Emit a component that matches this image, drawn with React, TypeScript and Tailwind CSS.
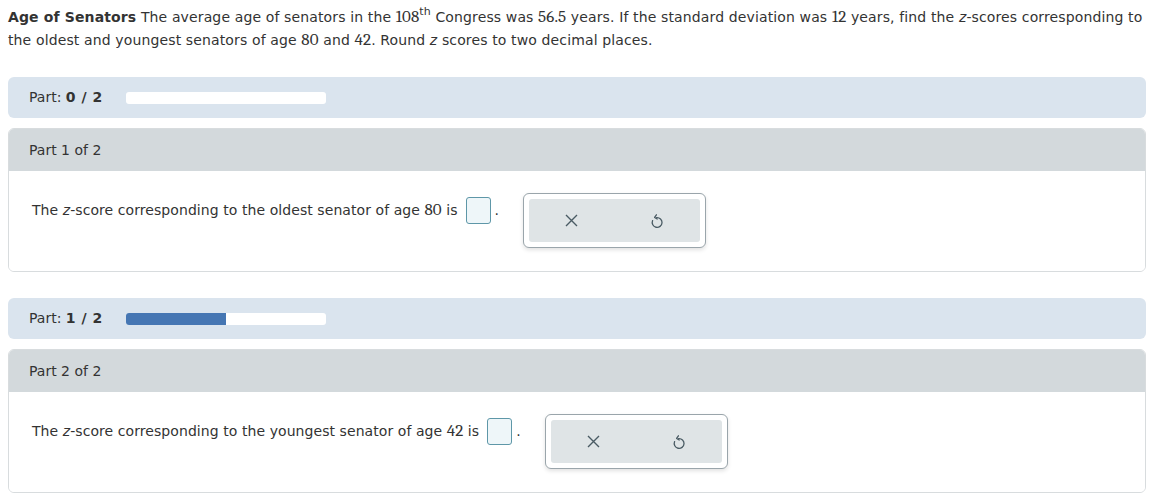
import React from 'react';

const Num: React.FC<{ children: React.ReactNode }> = ({ children }) => (
  <span className="font-serif text-[17px] leading-none">{children}</span>
);

const ProgressBar: React.FC<{ done: number; total: number }> = ({ done, total }) => (
  <div className="flex items-center h-[41px] rounded-md bg-[#dae4ee] pl-[21px]">
    <span className="w-[97px]">
      Part: <b className="tracking-[0.5px]">{done} / {total}</b>
    </span>
    <div className="w-[200px] h-[12px] rounded-[3px] bg-white overflow-hidden">
      <div className="h-full bg-[#4576b3]" style={{ width: `${(done / total) * 100}%` }} />
    </div>
  </div>
);

const XIcon = () => (
  <svg width="13" height="13" viewBox="0 0 13 13" fill="none" stroke="#4a5b64" strokeWidth="1.4">
    <path d="M1 1 L12 12 M12 1 L1 12" />
  </svg>
);

const UndoIcon = () => (
  <svg width="12" height="16" viewBox="0 0 12 16" fill="none" stroke="#4a5b64" strokeWidth="1.3" strokeLinecap="round" strokeLinejoin="round">
    <path d="M5.6 4.6 A4.9 4.9 0 1 1 1.6 7.6" />
    <path d="M5.4 1.8 L3.6 4.4 L6.2 6" />
  </svg>
);

const PartCard: React.FC<{ title: string; children: React.ReactNode }> = ({ title, children }) => (
  <div className="rounded-md border border-[#d8dcde] overflow-hidden">
    <div className="h-[42px] bg-[#d3d9dc] flex items-center pl-[20px]">{title}</div>
    <div className="h-[100px] bg-white flex items-start pl-[23px] pt-[22px]">{children}</div>
  </div>
);

const Answer: React.FC<{ before: React.ReactNode }> = ({ before }) => (
  <div className="flex items-start">
    <div className="flex items-center h-[30px] mt-[2px]">
      <span className="tracking-[0.07px]">{before}</span>
      <span className="ml-[8px] inline-block w-[25px] h-[27px] rounded-[3px] border border-[#5e97a8] bg-[#eef6f9]" />
      <span className="ml-[4px]">.</span>
    </div>
    <div className="ml-[24px] w-[183px] h-[55px] rounded-md border border-[#9aa5ab] bg-white p-[5px] shadow-[0_2px_4px_rgba(0,0,0,0.12)]">
      <div className="h-full rounded-[3px] bg-[#dfe4e6] flex items-center">
        <div className="w-1/2 flex justify-center"><XIcon /></div>
        <div className="w-1/2 flex justify-center"><UndoIcon /></div>
      </div>
    </div>
  </div>
);

export default function App() {
  return (
    <div className="bg-white text-[14px] text-[#333] min-h-[501px] px-[8px] pt-[6px] font-['DejaVu_Sans']">
      <p className="leading-[23px] tracking-[0.13px]">
        <b>Age of Senators</b> The average age of senators in the <Num>108</Num>
        <span className="text-[11px] align-[7px] leading-none">th</span> Congress was <Num>56.5</Num> years. If the
        standard deviation was <Num>12</Num> years, find the <i>z</i>-scores corresponding to the oldest and youngest
        senators of age <Num>80</Num> and <Num>42</Num>. Round <i>z</i> scores to two decimal places.
      </p>

      <div className="mt-[25px] flex flex-col gap-[10px]">
        <ProgressBar done={0} total={2} />
        <PartCard title="Part 1 of 2">
          <Answer
            before={
              <>
                The <i>z</i>-score corresponding to the oldest senator of age <Num>80</Num> is
              </>
            }
          />
        </PartCard>
      </div>

      <div className="mt-[26px] flex flex-col gap-[10px]">
        <ProgressBar done={1} total={2} />
        <PartCard title="Part 2 of 2">
          <Answer
            before={
              <>
                The <i>z</i>-score corresponding to the youngest senator of age <Num>42</Num> is
              </>
            }
          />
        </PartCard>
      </div>
    </div>
  );
}
